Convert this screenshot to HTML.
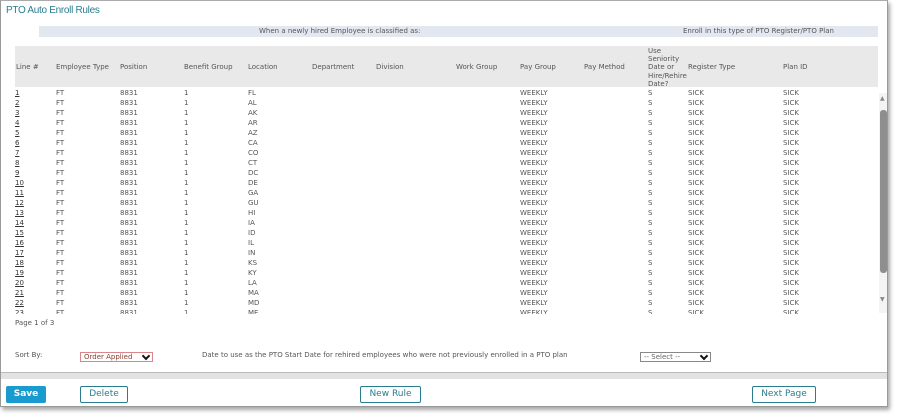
<!DOCTYPE html>
<html><head><style>
body{margin:0;width:897px;height:417px;background:#fff;position:relative;overflow:hidden;font-family:"DejaVu Sans","Liberation Sans",sans-serif;font-size:7px;color:#555;}
.frame{position:absolute;left:0;top:0;width:886px;height:405px;border:1px solid #999;border-top:1px solid #aaa;box-shadow:2px 3px 4px rgba(0,0,0,.35);background:#fff;}
.a{position:absolute;white-space:nowrap;}
.title{left:5px;top:4px;font-family:"Liberation Sans",sans-serif;font-size:10px;color:#2a7d8e;letter-spacing:-.3px}
.band{position:absolute;left:38px;top:25px;width:839px;height:11px;background:#e3e7f0;}
.hdr{position:absolute;left:14px;top:45px;width:863px;height:41px;background:#e9e9e9;}
.rows{position:absolute;left:0;top:88px;width:878px;height:225px;overflow:hidden;}
.r{position:absolute;height:10px;}
.r span{position:absolute;top:0;}
u{color:#333}
.btn{position:absolute;top:385px;height:17px;border:1px solid #2a7d8e;border-radius:2px;box-sizing:border-box;color:#2a7d8e;font-size:9px;text-align:center;line-height:15px;}
.sel{position:absolute;height:10px;box-sizing:border-box;font-size:7px;line-height:9px;padding-left:3px}
.chev{position:absolute;right:3px;top:2px;width:4px;height:4px;border-right:2px solid #111;border-bottom:2px solid #111;transform:rotate(45deg);top:0px}
</style></head><body>
<div class="frame">
<div class="a title">PTO Auto Enroll Rules</div>
<div class="band"></div>
<div class="a" style="left:258px;top:26px">When a newly hired Employee is classified as:</div>
<div class="a" style="left:682px;top:26px">Enroll in this type of PTO Register/PTO Plan</div>
<div class="hdr"></div>
<div class="a" style="left:15px;top:62px">Line #</div>
<div class="a" style="left:55px;top:62px">Employee Type</div>
<div class="a" style="left:119px;top:62px">Position</div>
<div class="a" style="left:183px;top:62px">Benefit Group</div>
<div class="a" style="left:247px;top:62px">Location</div>
<div class="a" style="left:311px;top:62px">Department</div>
<div class="a" style="left:375px;top:62px">Division</div>
<div class="a" style="left:455px;top:62px">Work Group</div>
<div class="a" style="left:519px;top:62px">Pay Group</div>
<div class="a" style="left:583px;top:62px">Pay Method</div>
<div class="a" style="left:647px;top:46px;line-height:8.2px">Use<br>Seniority<br>Date or<br>Hire/Rehire<br>Date?</div>
<div class="a" style="left:687px;top:62px">Register Type</div>
<div class="a" style="left:782px;top:62px">Plan ID</div>
<div class="rows" id="rows"></div>
<div style="position:absolute;left:878px;top:92px;width:8px;height:220px;background:#f4f4f4"></div>
<div style="position:absolute;left:879px;top:109px;width:7px;height:163px;background:#8e8e8e;border-radius:3px"></div>
<div class="a" style="left:879px;top:94px;font-size:6px;color:#888">▲</div>
<div class="a" style="left:879px;top:295px;font-size:6px;color:#888">▼</div>
<div class="a" style="left:14px;top:318px">Page 1 of 3</div>
<div class="a" style="left:14px;top:350px">Sort By:</div>
<div class="sel" style="left:79px;top:351px;width:73px;border:1px solid #d9878a;color:#8a4030">Order Applied<span class="chev"></span></div>
<div class="a" style="left:201px;top:350px">Date to use as the PTO Start Date for rehired employees who were not previously enrolled in a PTO plan</div>
<div class="sel" style="left:639px;top:351px;width:71px;border:1px solid #888;color:#666">-- Select --<span class="chev"></span></div>
<div style="position:absolute;left:0;top:371px;width:886px;height:6px;background:#e2e2e2;border-top:1px solid #bbb"></div>
<div class="btn" style="left:5px;width:40px;background:#1a9bd0;border-color:#1a9bd0;color:#fff;font-weight:bold">Save</div>
<div class="btn" style="left:79px;width:48px">Delete</div>
<div class="btn" style="left:359px;width:61px">New Rule</div>
<div class="btn" style="left:751px;width:64px">Next Page</div>
</div>
<script>
var s="FL AL AK AR AZ CA CO CT DC DE GA GU HI IA ID IL IN KS KY LA MA MD ME".split(" "),h="";
for(var i=0;i<s.length;i++){h+='<div class="r" style="top:'+(0+i*10)+'px;left:0;width:878px"><span style="left:14px"><u>'+(i+1)+'</u></span><span style="left:55px">FT</span><span style="left:119px">8831</span><span style="left:183px">1</span><span style="left:247px">'+s[i]+'</span><span style="left:519px">WEEKLY</span><span style="left:647px">S</span><span style="left:687px">SICK</span><span style="left:782px">SICK</span></div>';}
document.getElementById("rows").innerHTML=h;
</script>
</body></html>
